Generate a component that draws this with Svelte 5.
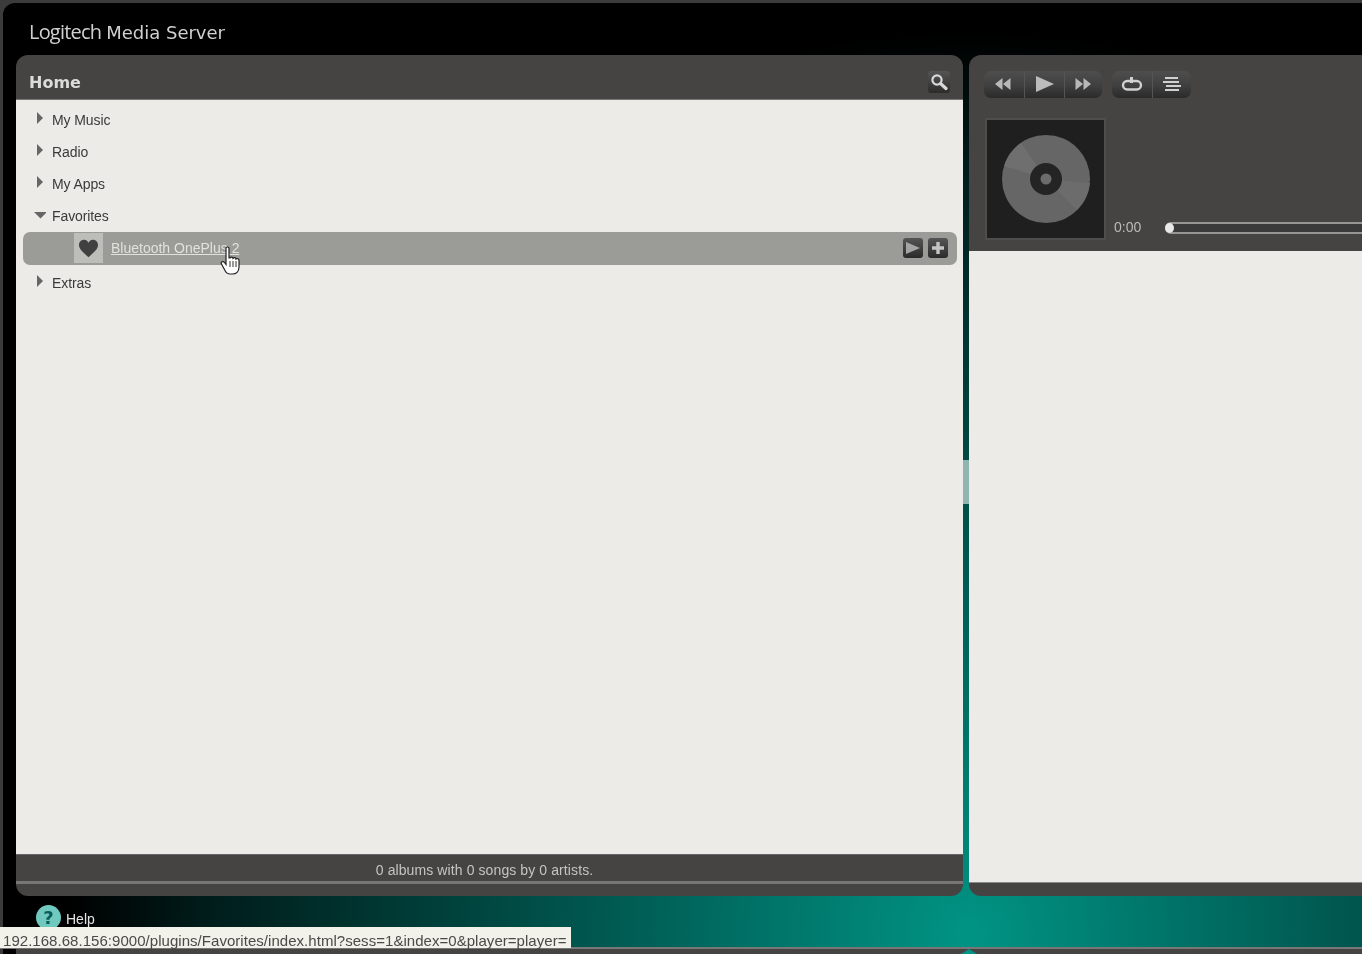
<script>
  const items = [
    { label: 'My Music' },
    { label: 'Radio' },
    { label: 'My Apps' },
    { label: 'Favorites', open: true },
    { label: 'Bluetooth OnePlus 2', selected: true },
    { label: 'Extras' }
  ];
</script>

<div class="page">
  <div class="frame">
    <header class="top">
      <span class="logo">Logitech</span>
      <span class="product">Media Server</span>
    </header>

    <div class="panels">
      <!-- Browse panel -->
      <section class="panel left">
        <div class="panel-head">
          <h1>Home</h1>
          <button class="tool search" aria-label="Search">
            <svg width="18" height="18" viewBox="0 0 18 18">
              <circle cx="7" cy="7" r="4.6" fill="none" stroke="#d8d8d8" stroke-width="2.2" />
              <path d="M10.5 10.5 16 15.5" stroke="#d8d8d8" stroke-width="3.2" stroke-linecap="round" />
            </svg>
          </button>
        </div>

        <ul class="tree">
          {#each items as item}
            {#if item.selected}
              <li class="row selected">
                <span class="thumb">
                  <svg width="21" height="19" viewBox="0 0 24 22">
                    <path d="M12 21C5 15 1 11.500 1 7c0-3.400 2.600-6 5.800-6C9 1 11 2.300 12 4.300 13 2.300 15 1 17.200 1 20.400 1 23 3.600 23 7c0 4.500-4 8-11 14z" fill="#404040" />
                  </svg>
                </span>
                <a href="#fav" class="link">{item.label}</a>
                <span class="row-tools">
                  <button class="tool small" aria-label="Play">
                    <svg width="16" height="14" viewBox="0 0 16 14"><path d="M1 1l14 6-14 6z" fill="#a4a4a4" /></svg>
                  </button>
                  <button class="tool small" aria-label="Add">
                    <svg width="14" height="14" viewBox="0 0 14 14"><path d="M7 1v12M1 7h12" stroke="#c4c4c4" stroke-width="3.400" /></svg>
                  </button>
                </span>
              </li>
            {:else}
              <li class="row">
                <svg class="arrow" class:open={item.open} width="12" height="12" viewBox="0 0 12 12">
                  {#if item.open}
                    <path d="M0 2h13L6.500 8.500z" fill="#666" />
                  {:else}
                    <path d="M3 0l6 6-6 6z" fill="#666" />
                  {/if}
                </svg>
                <span>{item.label}</span>
              </li>
            {/if}
          {/each}
        </ul>

        <div class="status">0 albums with 0 songs by 0 artists.</div>
        <div class="panel-foot"></div>
      </section>

      <div class="splitter"><span></span></div>

      <!-- Player panel -->
      <section class="panel right">
        <div class="player">
          <div class="controls">
            <div class="btn-group">
              <button class="w40 prev" aria-label="Previous">
                <svg width="17" height="12" viewBox="0 0 17 12"><path d="M8.500 0v12L1 6zM16.500 0v12L9 6z" fill="#b8b8b8" /></svg>
              </button>
              <button class="w40" aria-label="Play">
                <svg width="18" height="16" viewBox="0 0 18 16"><path d="M0 0l18 8-18 8z" fill="#bcbcbc" /></svg>
              </button>
              <button class="w38" aria-label="Next">
                <svg width="17" height="12" viewBox="0 0 17 12"><path d="M.5 0v12L8 6zM8.500 0v12L16 6z" fill="#b8b8b8" /></svg>
              </button>
            </div>
            <div class="btn-group">
              <button class="w40" aria-label="Repeat">
                <svg width="22" height="15" viewBox="0 0 22 15">
                  <rect x="2" y="5" width="18" height="8.500" rx="4.200" fill="none" stroke="#d0d0d0" stroke-width="2.400" />
                  <path d="M9 1v6h3V1z" fill="#d0d0d0" />
                </svg>
              </button>
              <button class="w39" aria-label="Shuffle">
                <svg width="20" height="16" viewBox="0 0 20 16">
                  <path d="M3 2h13M1 6h16M4 10h15M3 14h14" stroke="#d0d0d0" stroke-width="2.200" />
                </svg>
              </button>
            </div>
          </div>

          <div class="now-playing">
            <div class="cover">
              <svg width="88" height="88" viewBox="0 0 88 88">
                <circle cx="44" cy="44" r="44" fill="#666" />
                <path d="M44 44 19 8A44 44 0 0 0 2 31z" fill="#6f6f6f" />
                <path d="M44 44 88 48A44 44 0 0 1 75 75z" fill="#6c6c6c" />
                <circle cx="44" cy="44" r="16" fill="#242424" />
                <circle cx="44" cy="44" r="5.500" fill="#6c6c6c" />
              </svg>
            </div>
            <div class="progress">
              <span class="time">0:00</span>
              <div class="slider"><span class="knob"></span></div>
            </div>
          </div>
        </div>
        <div class="playlist"></div>
        <div class="panel-foot"></div>
      </section>
    </div>

    <div class="help">
      <span class="help-icon">?</span>
      <span class="help-label">Help</span>
    </div>
  </div>
  <div class="strip"><span class="notch"></span></div>

  <!-- browser status bubble and mouse pointer sit over the page -->
  <div class="url">192.168.68.156:9000/plugins/Favorites/index.html?sess=1&amp;index=0&amp;player=player=</div>
  <svg class="pointer" width="22" height="30" viewBox="0 0 22 30">
    <path d="M6 2.500c0-2 3-2 3 0V12l1 0c.6-1.400 2.800-1.200 3 .3 .8-1.100 2.800-.8 3 .7 1-.8 3-.3 3 1.500V21c0 4-2.500 7-6.500 7H10c-2.500 0-4-1.500-5-3.500L1.500 18c-1-2 1.500-3.500 3-1.500L6 18.500z" fill="#fff" stroke="#222" stroke-width="1.200" />
    <path d="M10 15v6M13 15v6M16 15v6" stroke="#333" stroke-width="1" />
  </svg>
</div>

<style>
  :global(body) {
    margin: 0;
    background: #000;
  }

  .page {
    position: relative;
    width: 1362px;
    height: 954px;
    overflow: hidden;
    box-sizing: border-box;
    padding: 3px 0 0 3px;
    background: #3b3b3b;
    display: flex;
    flex-direction: column;
    font-family: "Liberation Sans", Arial, sans-serif;
    font-size: 14px;
    filter: blur(0.5px);
  }

  .frame {
    flex: 1;
    min-height: 0;
    border-radius: 12px 0 0 0;
    overflow: hidden;
    background: radial-gradient(ellipse 900px 900px at 966px 930px, #009484 0%, #005a52 40%, #001c1a 85%, #000 100%), #000;
  }

  .top {
    height: 52px;
    box-sizing: border-box;
    padding: 15px 0 0 26px;
    display: flex;
    align-items: baseline;
    gap: 5px;
    color: #d0d0d0;
  }

  .logo {
    font-family: "Open Sans", sans-serif;
    font-size: 20px;
    letter-spacing: -0.8px;
  }

  .product {
    font-family: "DejaVu Sans", sans-serif;
    font-size: 18px;
  }

  .panels {
    display: flex;
    align-items: stretch;
    height: 841px;
    padding-left: 13px;
  }

  .panel {
    display: flex;
    flex-direction: column;
    background: #454443;
    overflow: hidden;
  }

  .left {
    flex: 0 0 947px;
    border-radius: 12px;
  }

  .right {
    flex: 0 0 600px;
    border-radius: 12px;
  }

  .splitter {
    flex: 0 0 6px;
    display: flex;
    align-items: flex-start;
  }

  .splitter span {
    display: block;
    width: 6px;
    height: 44px;
    margin-top: 405px;
    background: #90b5b0;
  }

  .panel-head {
    height: 45px;
    flex-shrink: 0;
    display: flex;
    align-items: center;
    justify-content: space-between;
    box-sizing: border-box;
    padding: 16px 13px 6px 13px;
    border-bottom: 1px solid #777;
  }

  h1 {
    margin: 0;
    color: #dcdcdc;
    font-family: "DejaVu Sans", sans-serif;
    font-size: 16px;
    font-weight: 700;
  }

  button {
    border: 0;
    padding: 0;
    margin: 0;
    display: flex;
    align-items: center;
    justify-content: center;
    background: none;
  }

  .tool {
    border-radius: 3px;
    background: linear-gradient(#555, #2b2b2b);
  }

  .search {
    width: 22px;
    height: 22px;
  }

  .tree {
    flex: 1;
    margin: 0;
    padding: 4px 6px 0 7px;
    list-style: none;
    background: #ecebe8;
    color: #3a3a3a;
  }

  .row {
    height: 32px;
    display: flex;
    align-items: center;
    gap: 3px;
    padding-left: 11px;
  }

  .arrow {
    flex: 0 0 12px;
    margin: -4px 0 0 0;
    width: 12px;
  }

  .arrow.open {
    margin: -1px 0 0 0;
  }

  .row span {
    margin-left: 3px;
    letter-spacing: -0.1px;
  }

  .selected {
    height: 33px;
    box-sizing: border-box;
    margin-bottom: 2px;
    padding: 0 9px 1px 51px;
    gap: 8px;
    border-radius: 7px;
    background: #9b9b97;
  }

  .thumb {
    flex: 0 0 29px;
    height: 30px;
    margin: 0 !important;
    background: #bdbdb9;
    display: flex;
    align-items: center;
    justify-content: center;
  }

  .link {
    color: #e2e2dc;
    text-decoration: underline;
    flex: 1;
  }

  .row-tools {
    display: flex;
    gap: 5px;
  }

  .small {
    width: 20px;
    height: 20px;
  }

  .status {
    flex: 0 0 27px;
    box-sizing: border-box;
    padding: 7px 10px 0 0;
    border-top: 1px solid #666;
    text-align: center;
    color: #c4c4c4;
    line-height: 17px;
    letter-spacing: 0.1px;
  }

  .panel-foot {
    flex: 0 0 12px;
    border-top: 3px solid #777;
  }

  .right .panel-foot {
    flex-basis: 13px;
    border-top: 1px solid #8a8a8a;
  }

  .player {
    flex: 0 0 196px;
    box-sizing: border-box;
    padding: 16px 0 0 15px;
  }

  .controls {
    display: flex;
    gap: 10px;
  }

  .btn-group {
    display: flex;
    height: 27px;
    border-radius: 7px;
    overflow: hidden;
    background: linear-gradient(#4e4e4e, #3f3f3f 55%, #2a2a2a);
  }

  .btn-group button {
    padding-bottom: 2px;
  }

  .btn-group button + button {
    border-left: 1px solid #555;
  }

  .w40 {
    width: 40px;
  }

  .w39 {
    width: 39px;
  }

  .w38 {
    width: 38px;
  }

  .prev {
    padding-right: 3px;
  }

  .now-playing {
    display: flex;
    align-items: flex-end;
    gap: 8px;
    margin: 20px 0 0 1px;
  }

  .cover {
    width: 121px;
    height: 122px;
    box-sizing: border-box;
    border: 2px solid #4e4e4e;
    background: #1f1f1f;
    display: flex;
    align-items: center;
    justify-content: center;
  }

  .progress {
    display: flex;
    align-items: center;
    gap: 24px;
    padding-bottom: 5px;
    color: #bbb;
  }

  .time {
    margin-top: -1px;
  }

  .slider {
    position: relative;
    width: 400px;
    height: 12px;
    box-sizing: border-box;
    border: 2px solid #969696;
    border-radius: 6px;
    background: #3a3a3a;
  }

  .knob {
    position: absolute;
    left: -2px;
    top: -1px;
    width: 9px;
    height: 10px;
    border-radius: 50%;
    background: #e8e8e8;
  }

  .playlist {
    flex: 1;
    background: #ecebe8;
  }

  .help {
    display: flex;
    align-items: center;
    gap: 5px;
    padding: 9px 0 0 33px;
    color: #e4e4e4;
  }

  .help-label {
    margin-top: 2px;
  }

  .help-icon {
    width: 25px;
    height: 25px;
    flex-shrink: 0;
    border-radius: 50%;
    background: #6fc9bf;
    color: #0b5c58;
    font-family: "DejaVu Sans", sans-serif;
    font-weight: 700;
    font-size: 18px;
    line-height: 25px;
    text-align: center;
  }

  .strip {
    flex: 0 0 7px;
    box-sizing: border-box;
    margin-left: -3px;
    border-top: 2px solid #777;
    background: linear-gradient(to right, #3b3b3b 3px, #000 3px, #000 16px, #454443 16px);
    display: flex;
  }

  .notch {
    width: 16px;
    height: 5px;
    margin-left: 961px;
    background: #009484;
    clip-path: polygon(50% 0, 100% 100%, 0 100%);
  }

  .url {
    position: absolute;
    left: 0;
    top: 927px;
    width: 571px;
    height: 21px;
    box-sizing: border-box;
    padding: 7px 0 0 3px;
    background: #f2f2ea;
    color: #4a4a4a;
    font-size: 15px;
    line-height: 14px;
    letter-spacing: 0.04px;
    white-space: nowrap;
  }

  .pointer {
    position: absolute;
    left: 220px;
    top: 246px;
  }
</style>
